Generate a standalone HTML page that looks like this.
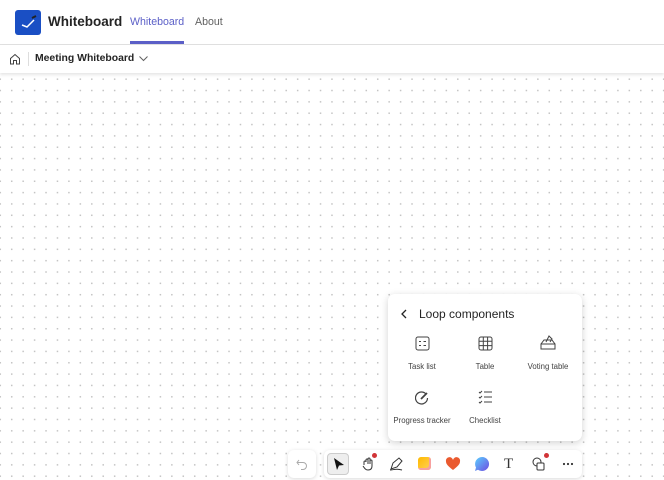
<!DOCTYPE html><html><head><style>
*{margin:0;padding:0;box-sizing:border-box}
body{width:664px;height:480px;overflow:hidden;font-family:"Liberation Sans",sans-serif;background:#fff;position:relative}
.top{position:absolute;left:0;top:0;width:664px;height:45px;border-bottom:1px solid #e0e0e0;background:#fff}
.logo{position:absolute;left:15px;top:10px;width:26px;height:25px;background:#1a4fc4;border-radius:3px}
.t1{position:absolute;left:48px;top:14px;font-size:13.5px;font-weight:bold;color:#242424}
.tab{position:absolute;top:16px;font-size:10.6px}
.bar2{position:absolute;left:0;top:45px;width:664px;height:28px;background:#fff;box-shadow:0 2px 3px rgba(0,0,0,.1);z-index:2}
.canvas{position:absolute;left:0;top:73px;width:664px;height:407px;background-image:radial-gradient(circle,#c4c4c4 0.7px,transparent 1px);background-size:11.45px 11.35px;background-position:6px 0.5px}
.panel{position:absolute;left:388px;top:294px;width:194px;height:147px;background:#fff;border-radius:7px;box-shadow:0 2px 8px rgba(0,0,0,.18)}
.lbl{position:absolute;font-size:7.8px;color:#424242;text-align:center;width:70px}
.ic{position:absolute}
.tb{position:absolute;top:450px;height:28px;background:#fff;border-radius:6px;box-shadow:0 1px 4px rgba(0,0,0,.15)}
</style></head><body>
<div class="canvas"></div>
<div class="top">
<div class="logo"><svg width="26" height="25"><path d="M7 15 L12 17 L19 10" stroke="#fff" stroke-width="1.5" fill="none"/><path d="M17 8 L21 6" stroke="#222" stroke-width="2"/></svg></div>
<div class="t1">Whiteboard</div>
<div class="tab" style="left:130px;color:#5b5fc7">Whiteboard</div>
<div style="position:absolute;left:130px;top:41px;width:54px;height:3px;background:#5b5fc7"></div>
<div class="tab" style="left:195px;color:#616161">About</div>
</div>
<div class="bar2">
<svg style="position:absolute;left:9px;top:8px" width="12" height="12" viewBox="0 0 12 12"><path d="M1.5 5.5 L6 1.5 L10.5 5.5 V11 H7.5 V7.5 H4.5 V11 H1.5Z" fill="none" stroke="#424242" stroke-width="1"/></svg>
<div style="position:absolute;left:28px;top:7px;width:1px;height:14px;background:#ddd"></div>
<div style="position:absolute;left:35px;top:8px;font-size:10.4px;font-weight:bold;color:#242424">Meeting Whiteboard</div>
<svg style="position:absolute;left:139px;top:11px" width="9" height="6"><path d="M0.5 0.5 L4.5 4.5 L8.5 0.5" fill="none" stroke="#616161"/></svg>
</div>
<div class="panel">
<svg style="position:absolute;left:12px;top:15px" width="8" height="10"><path d="M6 1 L2 5 L6 9" fill="none" stroke="#242424" stroke-width="1.3"/></svg>
<div style="position:absolute;left:31px;top:13px;font-size:12px;color:#242424">Loop components</div>
<svg class="ic" style="left:27px;top:42px" width="15" height="15"><rect x="1" y="1" width="13" height="13" rx="2" fill="none" stroke="#424242"/><path d="M4 5.5h2M8.5 5.5h2.5M4 9.5h2M8.5 9.5h2.5" stroke="#424242"/></svg>
<div class="lbl" style="left:-1px;top:68px">Task list</div>
<svg class="ic" style="left:90px;top:42px" width="15" height="15"><rect x="1" y="1" width="13" height="13" rx="2" fill="none" stroke="#424242"/><path d="M5.3 1v13M9.6 1v13M1 5.3h13M1 9.6h13" stroke="#424242"/></svg>
<div class="lbl" style="left:62px;top:68px">Table</div>
<svg class="ic" style="left:152px;top:41px" width="16" height="15"><path d="M1 9h14v5H1zM1 9l3-4h8l3 4M6 7l3-6 3 3-2 3" fill="none" stroke="#424242"/></svg>
<div class="lbl" style="left:125px;top:68px">Voting table</div>
<svg class="ic" style="left:27px;top:96px" width="15" height="15"><path d="M11 4A6 6 0 1 0 12.5 8" fill="none" stroke="#424242" stroke-width="1.2"/><path d="M6 9l6-6" stroke="#424242" stroke-width="1.8"/></svg>
<div class="lbl" style="left:-1px;top:122px">Progress tracker</div>
<svg class="ic" style="left:90px;top:96px" width="15" height="14"><path d="M1 2l1 1 2-2M1 7l1 1 2-2M1 12l1 1 2-2M6 2h8M6 7h8M6 12h8" fill="none" stroke="#424242"/></svg>
<div class="lbl" style="left:62px;top:122px">Checklist</div>
</div>
<div class="tb" style="left:288px;width:28px"><svg style="position:absolute;left:8px;top:8px" width="12" height="12"><path d="M3 2L1 4.5 3 7M1 4.5h6a3.5 3.5 0 0 1 0 7H5" fill="none" stroke="#aaa"/></svg></div>
<div class="tb" style="left:324px;width:258px">
<div style="position:absolute;left:3px;top:3px;width:22px;height:22px;background:#eee;border:1px solid #ccc;border-radius:4px"></div>
<svg style="position:absolute;left:9px;top:7px" width="12" height="14"><path d="M1 1L11 8 6 8.5 4 13Z" fill="#111"/></svg>
<svg style="position:absolute;left:37px;top:7px" width="14" height="14"><path d="M3 8V5a1 1 0 0 1 2 0V3a1 1 0 0 1 2 0v4V2a1 1 0 0 1 2 0v5V4a1 1 0 0 1 2 0v5c0 3-2 4-4 4S4 12 2 9" fill="none" stroke="#333"/></svg>
<div style="position:absolute;left:48px;top:3px;width:5px;height:5px;border-radius:50%;background:#d13438"></div>
<svg style="position:absolute;left:65px;top:7px" width="14" height="14"><path d="M2 12L4 6 10 1 13 4 8 10ZM1 13c4 0 6-2 12 0" fill="none" stroke="#333"/></svg>
<div style="position:absolute;left:94px;top:7px;width:13px;height:13px;border-radius:3px;background:linear-gradient(135deg,#ffb900,#ffd25a);box-shadow:inset -2px -2px 0 #f7a0a0"></div>
<svg style="position:absolute;left:121px;top:7px" width="16" height="14"><path d="M8 13C3 9 1 7 1 4.5A3.5 3.5 0 0 1 8 3a3.5 3.5 0 0 1 7 1.5C15 7 13 9 8 13Z" fill="#ea5a2f"/></svg>
<svg style="position:absolute;left:150px;top:6px" width="16" height="16"><defs><linearGradient id="g" x1="0" y1="0" x2="1" y2="1"><stop offset="0" stop-color="#5ad0ff"/><stop offset="1" stop-color="#6e4ce0"/></linearGradient></defs><path d="M8 1a7 7 0 1 1-4 12.7L1 15l1-3.5A7 7 0 0 1 8 1Z" fill="url(#g)"/></svg>
<div style="position:absolute;left:180px;top:6px;font-size:15px;font-family:'Liberation Serif',serif;color:#333">T</div>
<svg style="position:absolute;left:208px;top:7px" width="14" height="14"><circle cx="5" cy="5" r="4" fill="none" stroke="#333"/><rect x="5" y="6" width="7" height="7" rx="1" fill="#fff" stroke="#333"/></svg>
<div style="position:absolute;left:220px;top:3px;width:5px;height:5px;border-radius:50%;background:#d13438"></div>
<svg style="position:absolute;left:238px;top:12px" width="12" height="4"><circle cx="2" cy="2" r="1.1" fill="#333"/><circle cx="6" cy="2" r="1.1" fill="#333"/><circle cx="10" cy="2" r="1.1" fill="#333"/></svg>
</div>
</body></html>
